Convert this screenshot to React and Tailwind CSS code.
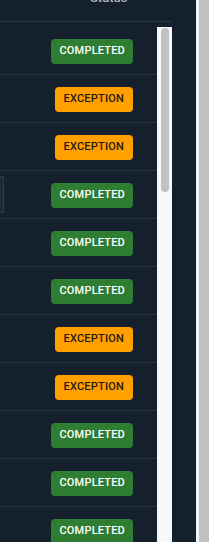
import React from "react";

const rows = [
  "completed",
  "exception",
  "exception",
  "completed",
  "completed",
  "completed",
  "exception",
  "exception",
  "completed",
  "completed",
  "completed",
];

function StatusBadge({ status }) {
  if (status === "exception") {
    return (
      <span className="inline-flex h-[25px] items-center rounded-[4px] bg-[#ffa000] px-[9px] text-[11px] font-medium tracking-[0.2px] text-[#1f1a10]">
        EXCEPTION
      </span>
    );
  }
  return (
    <span className="inline-flex h-[25px] items-center rounded-[4px] bg-[#2e7d32] px-[8px] text-[11px] font-medium tracking-[0.2px] text-white">
      COMPLETED
    </span>
  );
}

export default function App() {
  return (
    <div
      className="flex h-[542px] w-[209px] overflow-hidden bg-[#14202c]"
      style={{ fontFamily: "Roboto, 'Liberation Sans', sans-serif" }}
    >
      <div className="flex w-[196px] flex-col">
        <div className="w-[172px]">
          <div className="relative h-[22px] overflow-hidden border-b border-[#29353f]">
            <div className="absolute -top-[12px] left-[90px] text-[13px] font-medium text-[#aeb6bd]">
              Status
            </div>
          </div>
          <div className="mt-[5px] flex">
            <div className="w-[157px]">
              {rows.map((s, i) => (
                <div
                  key={i}
                  className="flex h-[48px] items-center border-b border-[#27333e] pr-[24px]"
                >
                  {i === 3 ? (
                    <div className="h-[37px] w-[4px] border border-l-0 border-[#2e3a45] bg-[#1e2a36]" />
                  ) : null}
                  <div className="ml-auto">
                    <StatusBadge status={s} />
                  </div>
                </div>
              ))}
            </div>
            <div className="h-[600px] w-[15px] bg-[#f8f8f8] pt-[1px]">
              <div className="ml-[4px] h-[164px] w-[8px] rounded-full bg-[#c1c1c1]" />
            </div>
          </div>
        </div>
      </div>
      <div className="flex w-[13px]">
        <div className="w-[3px] bg-[#f4f4f4]" />
        <div className="w-[10px] bg-[#c1c1c1]" />
      </div>
    </div>
  );
}
